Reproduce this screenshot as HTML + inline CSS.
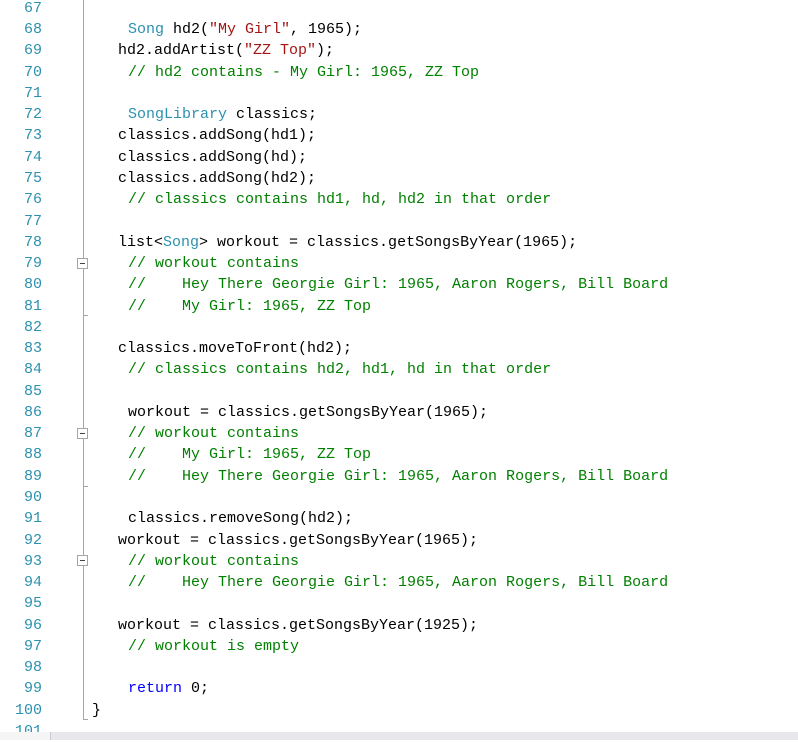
<!DOCTYPE html>
<html><head><style>
body{margin:0;width:798px;height:740px;background:#fff;overflow:hidden;position:relative;font-family:"Liberation Mono",monospace;font-size:15px}
.ln{position:absolute;left:0;width:42px;text-align:right;color:#2b91af;height:21.27px;line-height:21.27px;font-size:15px}
.c{position:absolute;white-space:pre;height:21.27px;line-height:21.27px;color:#000}
.k{color:#0000ff}.t{color:#2b91af}.s{color:#a31515}.g{color:#008000}
.gut{position:absolute;left:83px;width:1px;background:#a5a5a5}
.box{position:absolute;left:77px;width:9px;height:9px;border:1px solid #a5a5a5;background:#fff}
.box:after{content:"";position:absolute;left:2px;top:4px;width:5px;height:1px;background:#444}
.tick{position:absolute;left:83px;width:5px;height:1px;background:#a5a5a5}
</style></head><body>
<div class="gut" style="top:0;height:720px"></div>
<div class="tick" style="top:719px;left:83px;width:5px"></div>
<div class="box" style="top:258px"></div><div class="tick" style="top:315px"></div>
<div class="box" style="top:428px"></div><div class="tick" style="top:486px"></div>
<div class="box" style="top:555px"></div>
<div id="L"></div>
<div style="position:absolute;left:0;top:732px;width:798px;height:8px;background:#e8e8ec"></div>
<div style="position:absolute;left:0;top:732px;width:50px;height:8px;background:#f5f5f5;border-right:1px solid #ccc"></div>
<script>
var lines=[
[67,0,''],
[68,128,'<span class="t">Song</span> hd2(<span class="s">"My Girl"</span>, 1965);'],
[69,118,'hd2.addArtist(<span class="s">"ZZ Top"</span>);'],
[70,128,'<span class="g">// hd2 contains - My Girl: 1965, ZZ Top</span>'],
[71,0,''],
[72,128,'<span class="t">SongLibrary</span> classics;'],
[73,118,'classics.addSong(hd1);'],
[74,118,'classics.addSong(hd);'],
[75,118,'classics.addSong(hd2);'],
[76,128,'<span class="g">// classics contains hd1, hd, hd2 in that order</span>'],
[77,0,''],
[78,118,'list&lt;<span class="t">Song</span>&gt; workout = classics.getSongsByYear(1965);'],
[79,128,'<span class="g">// workout contains</span>'],
[80,128,'<span class="g">//    Hey There Georgie Girl: 1965, Aaron Rogers, Bill Board</span>'],
[81,128,'<span class="g">//    My Girl: 1965, ZZ Top</span>'],
[82,0,''],
[83,118,'classics.moveToFront(hd2);'],
[84,128,'<span class="g">// classics contains hd2, hd1, hd in that order</span>'],
[85,0,''],
[86,128,'workout = classics.getSongsByYear(1965);'],
[87,128,'<span class="g">// workout contains</span>'],
[88,128,'<span class="g">//    My Girl: 1965, ZZ Top</span>'],
[89,128,'<span class="g">//    Hey There Georgie Girl: 1965, Aaron Rogers, Bill Board</span>'],
[90,0,''],
[91,128,'classics.removeSong(hd2);'],
[92,118,'workout = classics.getSongsByYear(1965);'],
[93,128,'<span class="g">// workout contains</span>'],
[94,128,'<span class="g">//    Hey There Georgie Girl: 1965, Aaron Rogers, Bill Board</span>'],
[95,0,''],
[96,118,'workout = classics.getSongsByYear(1925);'],
[97,128,'<span class="g">// workout is empty</span>'],
[98,0,''],
[99,128,'<span class="k">return</span> 0;'],
[100,92,'}'],
[101,0,'']];
var h='';
lines.forEach(function(l){var top=(-2.2+21.27*(l[0]-67)).toFixed(2);
h+='<div class="ln" style="top:'+top+'px">'+l[0]+'</div>';
if(l[2])h+='<div class="c" style="top:'+top+'px;left:'+l[1]+'px">'+l[2]+'</div>';});
document.getElementById('L').innerHTML=h;
</script>
</body></html>
